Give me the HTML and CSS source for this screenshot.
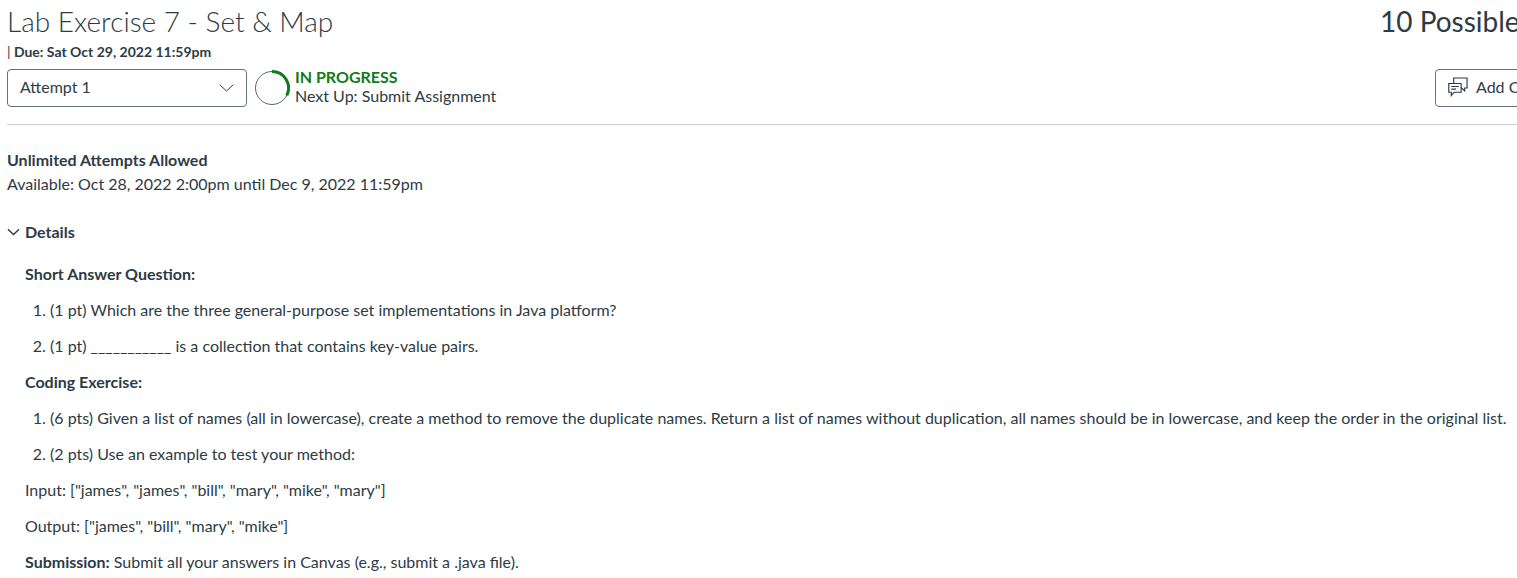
FILE: index.html
```html
<!DOCTYPE html>
<html lang="en">
<head>
    <meta charset="UTF-8">
    <title>Lab Exercise 7 - Set &amp; Map</title>
    <link rel="stylesheet" href="styles.css">
</head>
<body>
    <div class="page">
        <div class="title-row">
            <h1>Lab Exercise 7 - Set &amp; Map</h1>
            <div class="points">10 Possible Points</div>
        </div>
        <div class="due"><span class="due-bar">|</span> Due: Sat Oct 29, 2022 11:59pm</div>
        <div class="status-row">
            <div class="attempt-select">
                <span>Attempt 1</span>
                <svg class="select-arrow" width="15" height="8" viewBox="0 0 15 8"><path d="M.7.7l6.800 6.300L14.300.7" fill="none" stroke="#2d3b45" stroke-width="1"/></svg>
            </div>
            <svg class="progress-ring" width="36" height="36" viewBox="0 0 36 36">
                <circle cx="18" cy="18" r="16.500" fill="none" stroke="#556572" stroke-width="1"/>
                <path d="M18 1.500A16.500 16.500 0 0 1 32.800 25.300" fill="none" stroke="#127a1b" stroke-width="3"/>
            </svg>
            <div class="status-text">
                <div class="status-label">IN PROGRESS</div>
                <div>Next Up: Submit Assignment</div>
            </div>
            <button class="comment-btn">
                <svg width="20" height="20" viewBox="0 0 21 21" fill="none" stroke="#2d3b45" stroke-width="1.200">
                    <path d="M.8 6.800h13v9.200h-7.500l-2.800 3.500V16H.8z"/>
                    <path d="M6 6.800V1h14v10.500h-2.500v3l-3.700-3.500"/>
                    <path d="M3.500 10h8M3.500 12.800h5"/>
                </svg>
                <span>Add Comment</span>
            </button>
        </div>
        <hr class="rule">
        <div class="attempts">
            <div class="attempts-label">Unlimited Attempts Allowed</div>
            <div>Available: Oct 28, 2022 2:00pm until Dec 9, 2022 11:59pm</div>
        </div>
        <div class="details-toggle">
            <svg width="13" height="8" viewBox="0 0 13 8"><path d="M1 1.200l5.500 5.300L12 1.200" fill="none" stroke="#2d3b45" stroke-width="1.400"/></svg>
            <span>Details</span>
        </div>
        <div class="description">
            <p><strong>Short Answer Question:</strong></p>
            <ol>
                <li>(1 pt) Which are the three general-purpose set implementations in Java platform?</li>
                <li>(1 pt) ___________ is a collection that contains key-value pairs.</li>
            </ol>
            <p><strong>Coding Exercise:</strong></p>
            <ol>
                <li>(6 pts) Given a list of names (all in lowercase), create a method to remove the duplicate names. Return a list of names without duplication, all names should be in lowercase, and keep the order in the original list.</li>
                <li>(2 pts) Use an example to test your method:</li>
            </ol>
            <p>Input: ["james", "james", "bill", "mary", "mike", "mary"]</p>
            <p>Output: ["james", "bill", "mary", "mike"]</p>
            <p><strong>Submission:</strong> Submit all your answers in Canvas (e.g., submit a .java file).</p>
        </div>
    </div>
</body>
</html>
```
FILE: styles.css
```css
html, body {
    margin: 0;
    height: 578px;
    overflow: hidden;
    background: white;
}

body {
    font-family: Lato, "Liberation Sans", sans-serif;
    font-size: 16px;
    line-height: 24px;
    color: #2d3b45;
}

.page {
    padding-left: 7px;
}

.title-row {
    display: flex;
    justify-content: space-between;
    height: 44px;
}

h1 {
    margin: 0;
    font-size: 28px;
    font-weight: 300;
    line-height: 42px;
    white-space: nowrap;
}

.points {
    flex: none;
    width: 137px;
    font-size: 28px;
    line-height: 42px;
    white-space: nowrap;
}

.due {
    font-size: 14px;
    font-weight: 700;
    line-height: 16px;
}

.due-bar {
    font-weight: 400;
    color: #2d3b45;
}

.status-row {
    display: flex;
    align-items: center;
    height: 38px;
    margin-top: 9px;
}

.attempt-select {
    box-sizing: border-box;
    display: flex;
    align-items: center;
    justify-content: space-between;
    width: 240px;
    height: 38px;
    padding: 0 12px 2px 12px;
    border: 1px solid #66717b;
    border-radius: 4px;
    background: white;
}

.select-arrow {
    margin-top: 2px;
}

.progress-ring {
    flex: none;
    margin-left: 7px;
}

.status-text {
    margin-left: 5px;
    margin-top: -4px;
    line-height: 19px;
}

.status-label {
    font-weight: 700;
    color: #127a1b;
}

.comment-btn {
    flex: none;
    display: flex;
    align-items: center;
    gap: 8px;
    box-sizing: border-box;
    height: 38px;
    width: 170px;
    margin-left: auto;
    margin-right: -88px;
    padding: 0 0 2px 12px;
    border: 1px solid #66717b;
    border-radius: 4px;
    background: white;
    font: inherit;
    color: inherit;
    white-space: nowrap;
}

.rule {
    height: 1px;
    margin: 17px 0 0;
    border: none;
    background: #c7cdd1;
}

.attempts {
    margin-top: 23px;
}

.attempts-label {
    font-weight: 700;
}

.details-toggle {
    display: flex;
    align-items: center;
    gap: 5px;
    margin-top: 24px;
    font-weight: 700;
}

.description {
    padding-left: 18px;
    white-space: nowrap;
    margin-top: 18px;
}

.description p {
    margin: 12px 0;
}

.description ol {
    margin: 12px 0;
    padding-left: 25px;
}

.description li {
    margin: 12px 0;
}
```
